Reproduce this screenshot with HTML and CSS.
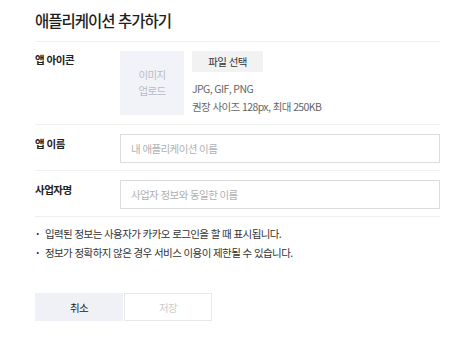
FILE: index.html
```html
<!DOCTYPE html>
<html lang="ko">
<head>
    <meta charset="UTF-8">
    <meta name="viewport" content="width=device-width, initial-scale=1.0">
    <title>애플리케이션 추가하기</title>
    <link rel="stylesheet" href="styles.css">
</head>
<body>
    <div class="container">
        <h1 class="titulo">애플리케이션 추가하기</h1>

        <div class="linha linha-icone">
            <div class="rotulo">앱 아이콘</div>
            <div class="campo campo-icone">
                <div class="caixa-imagem">이미지<br>업로드</div>
                <div class="info-imagem">
                    <button class="btn-arquivo">파일 선택</button>
                    <p class="info-texto">JPG, GIF, PNG</p>
                    <p class="info-texto">권장 사이즈 128px, 최대 250KB</p>
                </div>
            </div>
        </div>

        <div class="linha">
            <div class="rotulo">앱 이름</div>
            <div class="campo">
                <input type="text" placeholder="내 애플리케이션 이름">
            </div>
        </div>

        <div class="linha">
            <div class="rotulo">사업자명</div>
            <div class="campo">
                <input type="text" placeholder="사업자 정보와 동일한 이름">
            </div>
        </div>

        <ul class="avisos">
            <li>입력된 정보는 사용자가 카카오 로그인을 할 때 표시됩니다.</li>
            <li>정보가 정확하지 않은 경우 서비스 이용이 제한될 수 있습니다.</li>
        </ul>

        <div class="botoes">
            <button class="btn-cancelar">취소</button>
            <button class="btn-salvar" disabled>저장</button>
        </div>
    </div>
</body>
</html>
```

FILE: styles.css
```css
/* Estilos Gerais */
* {
    margin: 0;
    padding: 0;
    box-sizing: border-box;
    font-family: 'Noto Sans CJK KR', 'Noto Sans', sans-serif;
}

body {
    background-color: #fff;
    color: #222;
    letter-spacing: -0.6px;
}

.container {
    width: 405px;
    margin-left: 35px;
}

/* Titulo */
.titulo {
    font-size: 15.5px;
    font-weight: 500;
    letter-spacing: -1px;
    line-height: 24px;
    padding-top: 8px;
    padding-bottom: 9px;
    border-bottom: 1px solid #f0f0f0;
    color: #1e1e1e;
}

/* Linhas do formulario */
.linha {
    display: flex;
    padding: 9px 0 7px;
    border-bottom: 1px solid #f0f0f0;
}

.linha-icone {
    padding: 9px 0 8px;
}

.rotulo {
    width: 85px;
    font-size: 10.5px;
    font-weight: bold;
    letter-spacing: -0.5px;
    line-height: 18px;
    padding-top: 1px;
}

.linha-icone .rotulo {
    padding-top: 0;
}

.campo {
    flex: 1;
}

.campo input {
    width: 100%;
    height: 29px;
    border: 1px solid #dcdcdc;
    padding: 0 10px;
    font-size: 10.5px;
    letter-spacing: -0.6px;
    color: #222;
    outline: none;
}

.campo input::placeholder {
    color: #b0b0b0;
}

.campo-icone {
    display: flex;
    gap: 8px;
}

.caixa-imagem {
    width: 64px;
    height: 64px;
    background-color: #f1f3f8;
    color: #b8bcc6;
    font-size: 10.5px;
    line-height: 16px;
    display: flex;
    align-items: center;
    justify-content: center;
    text-align: center;
}

.btn-arquivo {
    display: block;
    width: 71px;
    height: 21px;
    border: none;
    background-color: #f2f2f2;
    color: #333;
    font-size: 10.5px;
    letter-spacing: -0.6px;
    margin-bottom: 8px;
}

.info-texto {
    font-size: 10.5px;
    line-height: 18px;
    color: #666;
}

/* Avisos */
.avisos {
    list-style: none;
    margin-top: 7px;
}

.avisos li {
    font-size: 10.5px;
    line-height: 19px;
    color: #333;
    padding-left: 10px;
    position: relative;
}

.avisos li::before {
    content: '·';
    position: absolute;
    left: 1px;
    font-weight: bold;
}

/* Botoes */
.botoes {
    display: flex;
    gap: 1px;
    margin-top: 31px;
}

.botoes button {
    width: 88px;
    height: 28px;
    font-size: 10.5px;
    letter-spacing: -0.6px;
}

.btn-cancelar {
    border: none;
    background-color: #eff1f6;
    color: #222;
}

.btn-salvar {
    border: 1px solid #e8e8e8;
    background-color: #fff;
    color: #ccc;
}
```
